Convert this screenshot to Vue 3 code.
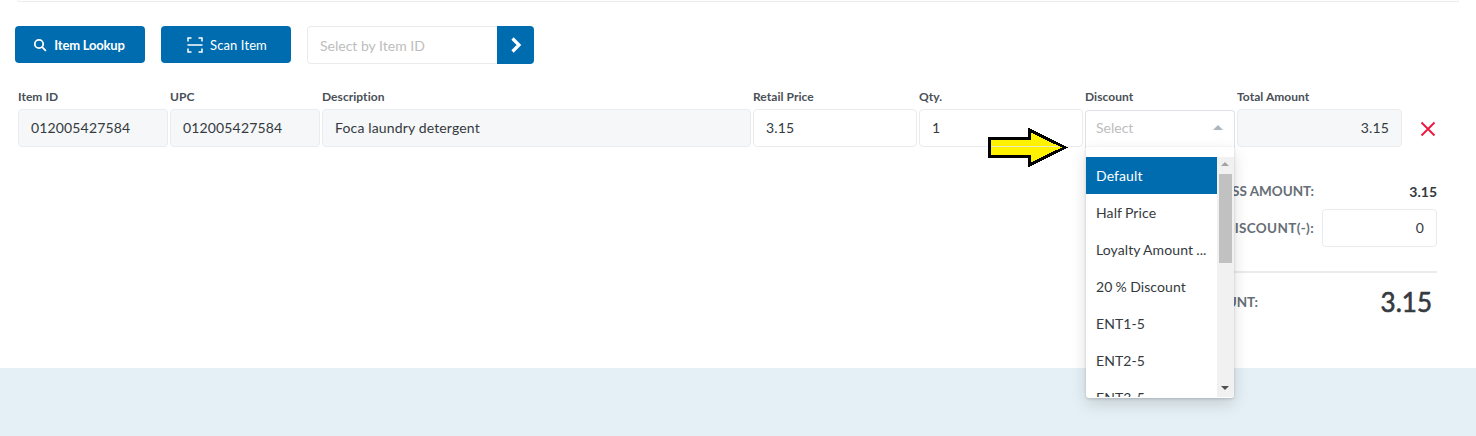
<script setup>
const fields = [
  { label: 'Item ID', value: '012005427584', cls: 'filled' },
  { label: 'UPC', value: '012005427584', cls: 'filled' },
  { label: 'Description', value: 'Foca laundry detergent', cls: 'filled' },
  { label: 'Retail Price', value: '3.15', cls: '' },
  { label: 'Qty.', value: '1', cls: '' },
]
const options = ['Default', 'Half Price', 'Loyalty Amount ...', '20 % Discount', 'ENT1-5', 'ENT2-5', 'ENT3-5']
</script>

<template>
  <div class="page">
    <main class="content">
      <div class="top-card"></div>
      <div class="toolbar">
        <button class="btn bold">
          <svg width="14" height="14" viewBox="0 0 14 14" fill="none" stroke="#fff" stroke-width="1.8" stroke-linecap="round"><circle cx="6" cy="6" r="4.2"/><path d="M9.2 9.2 12.4 12.4"/></svg>
          <span>Item Lookup</span>
        </button>
        <button class="btn scan">
          <svg width="16" height="16" viewBox="0 0 16 16" fill="none" stroke="#fff" stroke-width="1.5"><path d="M1 4.500V1h3.500M11.500 1H15v3.500M1 11.500V15h3.500M11.500 15H15v-3.500M0.500 8h15"/></svg>
          <span>Scan Item</span>
        </button>
        <div class="lookup">
          <input class="lookup-input" placeholder="Select by Item ID" />
          <button class="go">
            <svg width="12" height="16" viewBox="0 0 12 16" fill="none" stroke="#fff" stroke-width="3.200"><path d="M2.500 1.500 9 8 2.500 14.500"/></svg>
          </button>
        </div>
      </div>

      <div class="row">
        <div v-for="f in fields" :key="f.label" class="field">
          <label>{{ f.label }}</label>
          <input class="control" :class="f.cls" :value="f.value" readonly />
        </div>
        <div class="field discount">
          <label>Discount</label>
          <div class="select">
            <span>Select</span>
            <i class="caret"></i>
          </div>
          <div class="dropdown">
            <div class="list">
              <div class="options">
                <div v-for="(o, i) in options" :key="o" class="option" :class="{ active: i === 0 }">{{ o }}</div>
              </div>
              <div class="scrollbar">
                <i class="sb-up"></i>
                <i class="thumb"></i>
                <i class="sb-down"></i>
              </div>
            </div>
          </div>
        </div>
        <div class="field">
          <label>Total Amount</label>
          <input class="control filled right" value="3.15" readonly />
        </div>
        <button class="remove" aria-label="Remove">
          <svg width="16" height="16" viewBox="0 0 16 16" fill="none" stroke="#f0143c" stroke-width="1.8"><path d="M1.500 1.500 14.500 14.500M14.500 1.500 1.500 14.500"/></svg>
        </button>
      </div>

      <svg class="pointer" width="86" height="44" viewBox="0 0 86 44" shape-rendering="crispEdges">
        <path d="M2.500 11.500H42.500V3L78 20.500 42.500 38V29.500H2.500Z" fill="#fff200" stroke="#000" stroke-width="3"/>
        <path d="M4 19.500H72" stroke="#e9e9c4" stroke-width="1"/>
      </svg>

      <section class="summary">
        <div class="sum-row gross">
          <span class="sum-label">GROSS AMOUNT:</span>
          <span class="sum-value">3.15</span>
        </div>
        <div class="sum-row disc">
          <span class="sum-label">DISCOUNT(-):</span>
          <input class="control right disc-input" value="0" readonly />
        </div>
        <div class="sum-row total">
          <span class="sum-label">TOTAL AMOUNT:</span>
          <span class="total-value">3.15</span>
        </div>
      </section>
    </main>
    <footer class="footer"></footer>
  </div>
</template>

<style>
html, body { margin: 0; background: #fff; }
</style>

<style scoped>
* { box-sizing: border-box; }
.page {
  width: 1476px;
  height: 436px;
  overflow: hidden;
  display: flex;
  flex-direction: column;
  font-family: Lato, "Liberation Sans", sans-serif;
  color: #343a40;
  font-size: 14px;
}
.content {
  position: relative;
  height: 368px;
  padding: 0 39px 0 15px;
}
.top-card {
  height: 2px;
  margin: 0 -22px 0 2px;
  border: 1px solid #e9ecef;
  border-top: 0;
  border-radius: 0 0 4px 4px;
}
.toolbar {
  display: flex;
  gap: 16px;
  margin-top: 24px;
  height: 38px;
}
.btn {
  width: 130px;
  height: 37px;
  display: flex;
  align-items: center;
  justify-content: center;
  gap: 7px;
  border: 0;
  border-radius: 4px;
  padding: 0 6px;
  background: #006cb0;
  color: #fff;
  font: 13px Lato, sans-serif;
}
.btn.bold { font-weight: 700; letter-spacing: -0.2px; padding-right: 8px; }
.btn.scan { gap: 7px; padding-left: 8px; letter-spacing: .1px; }
.lookup { display: flex; width: 227px; height: 38px; }
.lookup-input {
  width: 190px;
  border: 1px solid #e9ecef;
  border-right: 0;
  border-radius: 4px 0 0 4px;
  padding: 0 12px;
  font: 14px Lato, sans-serif;
  outline: 0;
}
.lookup-input::placeholder, .select { color: #bdbdbd; }
.go {
  width: 37px;
  border: 0;
  padding: 0 0 0 1px;
  background: #006cb0;
  border-radius: 0 4px 4px 0;
  display: flex;
  align-items: center;
  justify-content: center;
}
.row {
  display: grid;
  grid-template-columns: 150px 150px 429px 164px 164px 150px 165px 35px;
  column-gap: 2px;
  margin: 24px 0 0 3px;
}
.field { display: flex; flex-direction: column; position: relative; }
label {
  height: 21px;
  line-height: 17px;
  font-size: 12px;
  font-weight: 700;
  letter-spacing: .05px;
  color: #495057;
}
.control {
  width: 100%;
  height: 38px;
  border: 1px solid #e9ecef;
  border-radius: 4px;
  padding: 0 12px 2px;
  font: 14px Lato, sans-serif;
  letter-spacing: .15px;
  color: #343a40;
  background: #fff;
  outline: 0;
}
.filled { background: #f6f7f9; }
.right { text-align: right; }
.select {
  height: 38px;
  margin-top: 1px;
  border: 1px solid #dee2e6;
  border-bottom: 0;
  border-radius: 4px 4px 0 0;
  padding: 0 10px 5px;
  display: flex;
  align-items: center;
  justify-content: space-between;
  font-size: 14px;
  background: #fff;
}
.caret {
  margin-right: 1px;
  border: 5px solid transparent;
  border-top: 0;
  border-bottom: 5px solid #adb5bd;
}
.dropdown {
  position: absolute;
  z-index: 2;
  left: 1px;
  top: 59px;
  width: 148px;
  height: 251px;
  padding-top: 10px;
  background: #fff;
  border-radius: 0 0 3px 3px;
  box-shadow: 0 6px 16px rgba(0, 0, 0, .14), 0 1px 3px rgba(0, 0, 0, .16);
}
.list { display: flex; height: 240px; overflow: hidden; }
.options { width: 131px; flex: none; overflow: hidden; }
.option {
  height: 37px;
  line-height: 37px;
  padding-left: 10px;
  font-size: 14px;
  letter-spacing: .1px;
  word-spacing: -.5px;
  color: #343a40;
  white-space: nowrap;
}
.option.active { background: #006cb0; color: #fff; }
.scrollbar {
  position: relative;
  flex: 1;
  background: #f1f1f1;
}
.thumb {
  position: absolute;
  left: 2px;
  right: 2px;
  top: 17px;
  height: 89px;
  background: #c1c1c1;
}
.sb-up, .sb-down {
  position: absolute;
  left: 4px;
  border: 4px solid transparent;
}
.sb-up { top: 5px; border-top: 0; border-bottom: 4px solid #a3a3a3; }
.sb-down { bottom: 7px; border-bottom: 0; border-top: 4px solid #505050; }
.remove {
  align-self: end;
  height: 38px;
  border: 0;
  padding: 0 0 0 12px;
  background: none;
  display: flex;
  align-items: center;
  justify-content: center;
}
.pointer {
  position: absolute;
  z-index: 3;
  left: 987px;
  top: 127px;
}
.summary {
  margin: 33px 0 0 auto;
  width: 337px;
}
.sum-row {
  display: flex;
  align-items: center;
  justify-content: space-between;
}
.sum-label {
  width: 214px;
  text-align: right;
  font-size: 13.5px;
  font-weight: 700;
  color: #666e76;
  white-space: nowrap;
}
.gross { height: 20px; }
.sum-value { font-size: 14px; font-weight: 700; color: #343a40; }
.disc { margin-top: 8px; padding-bottom: 24px; border-bottom: 2px solid #e9ecef; }
.disc .sum-label { letter-spacing: .35px; }
.disc-input { width: 115px; }
.total { margin-top: 11px; height: 36px; }
.total .sum-label { width: 158px; }
.total-value { font-size: 26px; font-weight: 400; -webkit-text-stroke: .6px #343a40; padding-right: 5px; }
.footer {
  flex: 1;
  background: #e5f0f6;
}
</style>
